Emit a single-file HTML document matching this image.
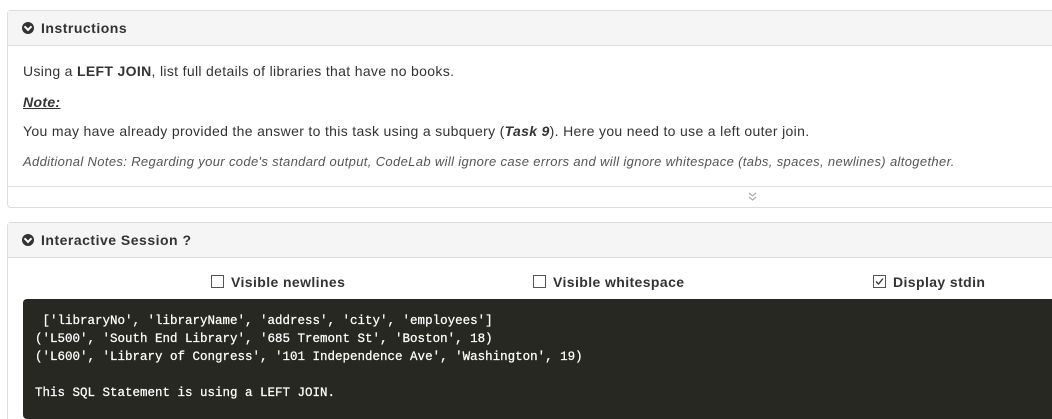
<!DOCTYPE html>
<html style="overflow:hidden"><head><style>
html,body{overflow:hidden;height:419px}
body{margin:0;background:#fff;font-family:"Liberation Sans",Arial,sans-serif;color:#333;width:1052px;position:relative}
.panel{position:absolute;left:7px;width:1060px;border:1px solid #ddd;border-radius:4px;background:#fff}
.hd{background:#f5f5f5;border-bottom:1px solid #ddd;height:35px;box-sizing:border-box;padding-left:14px;font-weight:bold;font-size:14px;line-height:34px;color:#333;letter-spacing:.5px}
.ic{display:inline-block;width:12px;height:12px;border-radius:50%;background:#333;vertical-align:-1px;margin-right:7px;position:relative}
.ic:after{content:"";position:absolute;left:3px;top:2px;width:4px;height:4px;border-right:2px solid #fff;border-bottom:2px solid #fff;transform:rotate(45deg)}
p{margin:0;position:absolute;left:15px;font-size:14px;white-space:nowrap;letter-spacing:.33px}
.cb{display:inline-block;width:11px;height:11px;border:1px solid #555;vertical-align:-1px;margin-right:7px;position:relative;background:#fff}
.lbl{position:absolute;top:51px;font-weight:bold;font-size:14px;letter-spacing:.4px}
pre{position:absolute;left:15px;top:76px;width:1060px;height:120px;margin:0;background:#272822;border-radius:4px;color:#fff;font-family:"Liberation Mono",Consolas,monospace;font-size:12.5px;line-height:18px;padding:13px 0 0 12px;box-sizing:border-box;-webkit-text-stroke:.25px #fff}
</style></head><body>
<div class="panel" style="top:10px;height:196px">
<div class="hd"><span class="ic"></span>Instructions</div>
<p style="top:52px">Using a <b>LEFT JOIN</b>, list full details of libraries that have no books.</p>
<p style="top:83px"><b><i><u>Note:</u></i></b></p>
<p style="top:112px">You may have already provided the answer to this task using a subquery (<b><i>Task 9</i></b>). Here you need to use a left outer join.</p>
<p style="top:143px;font-size:13px;letter-spacing:.35px;font-style:italic;color:#555">Additional Notes: Regarding your code's standard output, CodeLab will ignore case errors and will ignore whitespace (tabs, spaces, newlines) altogether.</p>
<div style="position:absolute;left:0;right:0;top:175px;border-top:1px solid #ddd"></div>
<svg style="position:absolute;left:740px;top:181px" width="9" height="9"><path d="M1 1L4.5 4L8 1M1 5L4.5 8L8 5" stroke="#aaa" stroke-width="1.2" fill="none"/></svg>
</div>
<div class="panel" style="top:222px;height:210px">
<div class="hd"><span class="ic"></span>Interactive Session ?</div>
<span class="lbl" style="left:203px"><span class="cb"></span>Visible newlines</span>
<span class="lbl" style="left:525px"><span class="cb"></span>Visible whitespace</span>
<span class="lbl" style="left:865px"><span class="cb"><svg width="11" height="11" style="position:absolute;left:0;top:0"><path d="M2 5.5L4.5 8L9 2.5" stroke="#333" stroke-width="1.3" fill="none"/></svg></span>Display stdin</span>
<pre> ['libraryNo', 'libraryName', 'address', 'city', 'employees']
('L500', 'South End Library', '685 Tremont St', 'Boston', 18)
('L600', 'Library of Congress', '101 Independence Ave', 'Washington', 19)

This SQL Statement is using a LEFT JOIN.</pre>
</div>
</body></html>
